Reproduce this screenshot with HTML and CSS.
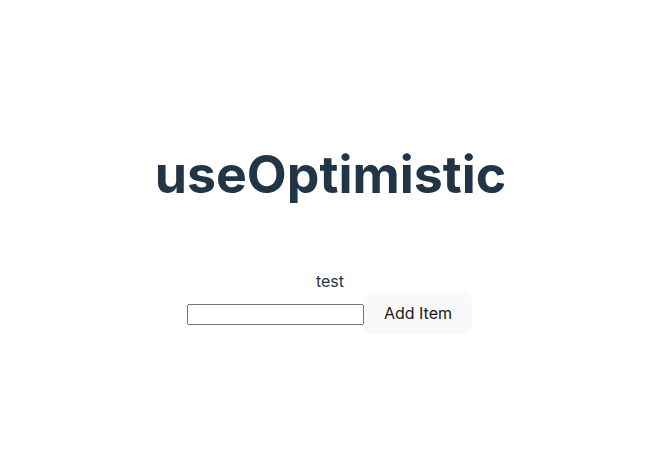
FILE: index.html
```html
<!DOCTYPE html>
<html lang="en">
<head>
    <meta charset="UTF-8">
    <title>useOptimistic</title>
    <link rel="stylesheet" href="styles.css">
</head>
<body>
<div id="root">
    <h1>useOptimistic</h1>
    <div class="items">
        <div>test</div>
    </div>
    <form class="addform">
        <input type="text" name="item">
        <button type="submit">Add Item</button>
    </form>
</div>
</body>
</html>
```

FILE: styles.css
```css
:root
{
    font-family: Inter, system-ui, Avenir, Helvetica, Arial, sans-serif;
    line-height: 1.5;
    font-weight: 400;
    color: #213547;
    background-color: #ffffff;
}

body
{
    margin: 0;
    display: flex;
    place-items: center;
    min-width: 320px;
    min-height: 100vh;
}

#root
{
    max-width: 1280px;
    margin: 0 auto;
    padding: 2rem;
    text-align: center;
}

h1
{
    font-size: 51.8px;
    line-height: 1.1;
    margin: 0.67em 2px 66px 0;
}

.items
{
    margin-right: 3px;
}

.addform
{
    display: flex;
    justify-content: center;
    align-items: baseline;
    margin: 0 4px 30px 0;
}

.addform input
{
    box-sizing: border-box;
    width: 177px;
}

button
{
    border-radius: 8px;
    border: 1px solid transparent;
    padding: 0.6em 1.2em;
    font-size: 1em;
    font-weight: 400;
    font-family: inherit;
    color: #1a1a1a;
    background-color: #f9f9f9;
    cursor: pointer;
}
```
